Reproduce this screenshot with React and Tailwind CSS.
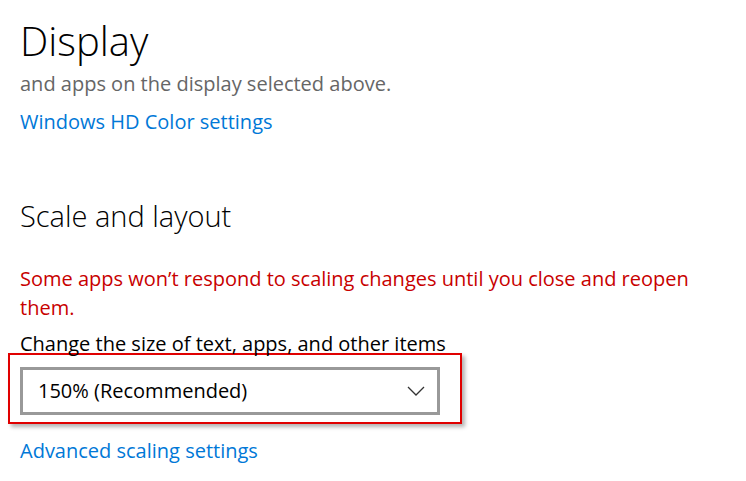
import React from "react";

const font = { fontFamily: '"Open Sans", "Noto Sans", sans-serif' };

const Chevron = () => (
    <svg width="18" height="10" viewBox="0 0 18 10" fill="none" stroke="#333" strokeWidth="1.3">
        <path d="M1 1 L9 9 L17 1" />
    </svg>
);

const App = () => {
    return (
        <div className="w-[746px] h-[481px] bg-white overflow-hidden" style={font}>
            <div className="pl-5 pt-[13px]">
                <h1 className="text-[40px] leading-[56px] font-light text-black">Display</h1>
                <p className="mt-[1px] text-[20px] leading-[28px] text-[#666]">and apps on the display selected above.</p>
                <a className="block mt-[10px] text-[20px] leading-[28px] text-[#0078d7]">Windows HD Color settings</a>

                <h2 className="mt-[62px] text-[29px] leading-[36px] font-light text-black">Scale and layout</h2>

                <p className="mt-[30px] text-[20px] leading-[29px] text-[#c80000] pr-12">
                    Some apps won’t respond to scaling changes until you close and reopen them.
                </p>

                <p className="mt-[8px] text-[20px] leading-[28px] text-black">Change the size of text, apps, and other items</p>
            </div>

            <div className="ml-2 -mt-[5px] w-[454px] border-2 border-[#e00000] shadow-[3px_3px_4px_rgba(0,0,0,0.3)] pt-[12px] pb-[7px] pl-[10px]">
                <div className="w-[420px] h-[48px] border-[3px] border-[#999] flex items-center justify-between pl-[15px] pr-[12px]">
                    <span className="text-[20px] text-black">150% (Recommended)</span>
                    <Chevron />
                </div>
            </div>

            <a className="block pl-5 mt-[13px] text-[20px] leading-[28px] text-[#0078d7]">Advanced scaling settings</a>
        </div>
    );
};

export default App;
